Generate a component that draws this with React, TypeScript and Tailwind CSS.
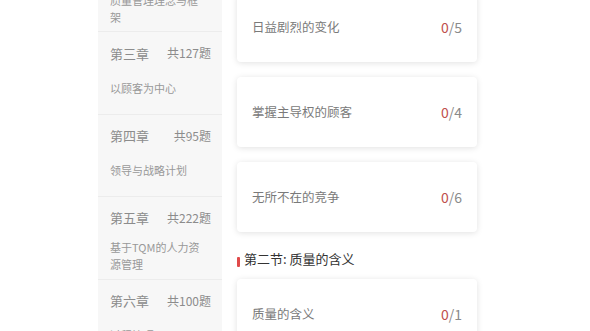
const chapters = [
  { name: '第二章', count: 86, title: '质量管理理念与框架' },
  { name: '第三章', count: 127, title: '以顾客为中心' },
  { name: '第四章', count: 95, title: '领导与战略计划' },
  { name: '第五章', count: 222, title: '基于TQM的人力资源管理' },
  { name: '第六章', count: 100, title: '过程管理' },
];

function ChapterItem({ c }: { c: (typeof chapters)[number] }) {
  return (
    <div className="h-[82.4px] flex flex-col border-b border-[#ececec] pl-[12px] pr-[11px]">
      <div className="h-[42px] shrink-0 flex items-center justify-between">
        <span className="text-[13px] text-[#8c8c8c]">{c.name}</span>
        <span className="text-[12px] text-[#8c8c8c]">共{c.count}题</span>
      </div>
      <div className="flex-1 flex items-center pb-[12px] pr-[5px]">
        <span className="text-[11px] leading-[17px] text-[#999]">{c.title}</span>
      </div>
    </div>
  );
}

function TopicCard({ title, total }: { title: string; total: number }) {
  return (
    <div className="h-[70px] rounded-[4px] bg-white shadow-[0_1px_6px_rgba(0,0,0,0.12)] flex items-center justify-between pl-[15px] pr-[15px]">
      <span className="text-[12.5px] text-[#7a7a7a]">{title}</span>
      <span className="text-[14px] text-[#8a8a8a]">
        <span className="text-[#c0504d]">0</span>/{total}
      </span>
    </div>
  );
}

export default function App() {
  return (
    <div
      className="w-[590px] h-[331px] overflow-hidden bg-white flex"
      style={{ fontFamily: '"Noto Sans CJK SC", "Noto Sans", sans-serif' }}
    >
      <div className="w-[98px] shrink-0" />
      <div className="w-[124px] shrink-0 bg-[#f7f7f7] h-full">
        <div className="-mt-[50px]">
          {chapters.map((c) => (
            <ChapterItem key={c.name} c={c} />
          ))}
        </div>
      </div>
      <div className="w-[240px] shrink-0 ml-[15px]">
        <div className="-mt-[8px] flex flex-col gap-[15px]">
          <TopicCard title="日益剧烈的变化" total={5} />
          <TopicCard title="掌握主导权的顾客" total={4} />
          <TopicCard title="无所不在的竞争" total={6} />
        </div>
        <div className="pt-[17px] pb-[10px] flex items-center">
          <div className="w-[3px] h-[10px] bg-[#e04a4a] rounded-[1px] mt-[6px]" />
          <span className="ml-[4px] text-[13px] leading-[20px] text-[#333]">第二节: 质量的含义</span>
        </div>
        <TopicCard title="质量的含义" total={1} />
      </div>
    </div>
  );
}
